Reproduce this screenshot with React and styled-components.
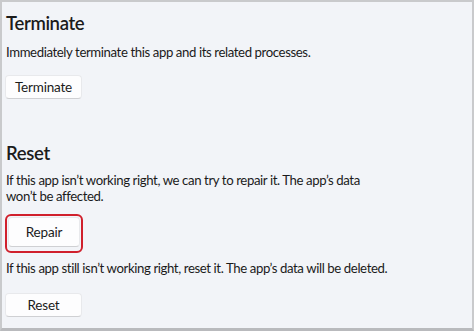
import styled, { createGlobalStyle } from "styled-components";

const GlobalStyle = createGlobalStyle`
  html, body {
    margin: 0;
    padding: 0;
    background: #f3f4f8;
  }
  body {
    font-family: "Lato", "Noto Sans", sans-serif;
    color: #1b1b1b;
  }
`;

const Frame = styled.div`
  box-sizing: border-box;
  width: 474px;
  height: 331px;
  border: 2px solid #c9cacc;
  border-bottom-width: 3px;
  border-bottom-color: #b9babd;
  background: #f2f4f8;
  padding: 8px 0 0 3px;
  overflow: hidden;
`;

const Section = styled.section`
  display: flex;
  flex-direction: column;
  align-items: flex-start;
  margin-bottom: ${({ $gap }) => $gap || 0}px;
`;

const Heading = styled.h2`
  margin: 0 0 ${({ $mb }) => $mb || 7}px 1px;
  font-size: 18.5px;
  font-weight: 600;
  line-height: 26px;
  letter-spacing: -0.35px;
`;

const Text = styled.p`
  margin: 0 0 ${({ $mb }) => $mb || 0}px 1px;
  padding-top: ${({ $pt }) => $pt || 0}px;
  font-size: 13.2px;
  line-height: 16px;
  letter-spacing: -0.4px;
  max-width: ${({ $max }) => $max || 400}px;
`;

const Highlight = styled.div`
  display: inline-flex;
  padding: 1px 1px 4px;
  margin: 0 0 ${({ $mb }) => $mb || 0}px 0;
  border: 2px solid #d0202c;
  border-radius: 6px;
`;

const Button = styled.button`
  box-sizing: border-box;
  width: ${({ $w }) => $w || 77}px;
  height: ${({ $h }) => $h || 24}px;
  margin: 0 0 ${({ $mb }) => $mb || 0}px 0;
  padding: 0;
  border: 1px solid #e8e9ec;
  border-bottom-color: #cfd0d3;
  border-radius: 4px;
  background: #fdfdfe;
  font-family: inherit;
  font-size: 13.5px;
  letter-spacing: -0.2px;
  color: #1b1b1b;
`;

export default function App() {
  return (
    <>
      <GlobalStyle />
      <Frame>
        <Section $gap={41}>
          <Heading $mb={8}>Terminate</Heading>
          <Text $mb={15}>Immediately terminate this app and its related processes.</Text>
          <Button>Terminate</Button>
        </Section>
        <Section>
          <Heading $mb={6}>Reset</Heading>
          <Text $mb={10} $max={368}>
            If this app isn’t working right, we can try to repair it. The app’s data won’t be affected.
          </Text>
          <Highlight $mb={7}>
            <Button $w={72} $h={30}>Repair</Button>
          </Highlight>
          <Text $mb={17}>If this app still isn’t working right, reset it. The app’s data will be deleted.</Text>
          <Button>Reset</Button>
        </Section>
      </Frame>
    </>
  );
}
